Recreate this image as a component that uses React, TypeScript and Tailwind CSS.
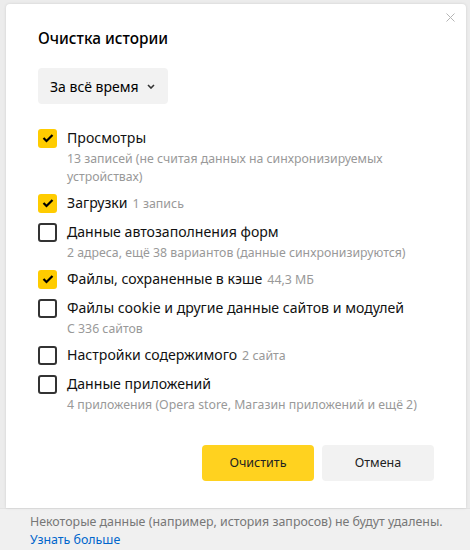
import { FC } from "react";

type Item = {
  label: string;
  note?: string;
  sub?: string;
  checked: boolean;
};

const ITEMS: Item[] = [
  {
    label: "Просмотры",
    sub: "13 записей (не считая данных на синхронизируемых устройствах)",
    checked: true,
  },
  { label: "Загрузки", note: "1 запись", checked: true },
  {
    label: "Данные автозаполнения форм",
    sub: "2 адреса, ещё 38 вариантов (данные синхронизируются)",
    checked: false,
  },
  { label: "Файлы, сохраненные в кэше", note: "44,3 МБ", checked: true },
  {
    label: "Файлы cookie и другие данные сайтов и модулей",
    sub: "С 336 сайтов",
    checked: false,
  },
  { label: "Настройки содержимого", note: "2 сайта", checked: false },
  {
    label: "Данные приложений",
    sub: "4 приложения (Opera store, Магазин приложений и ещё 2)",
    checked: false,
  },
];

const Checkbox: FC<{ checked: boolean }> = ({ checked }) =>
  checked ? (
    <div className="flex h-[19px] w-[19px] shrink-0 items-center justify-center rounded-[3px] bg-[#ffcc00]">
      <svg width="12" height="10" viewBox="0 0 12 10" fill="none">
        <path d="M1.5 5 L4.5 8 L10.5 2" stroke="#000" strokeWidth="2.2" />
      </svg>
    </div>
  ) : (
    <div className="h-[19px] w-[19px] shrink-0 rounded-[3px] border-2 border-[#333]" />
  );

export default function App() {
  return (
    <div
      className="flex h-[550px] w-[470px] flex-col overflow-hidden bg-[#ececec] pl-[6px] pr-[4px] pt-[4px]"
      style={{ fontFamily: '"Noto Sans", "Open Sans", sans-serif' }}
    >
      <div className="relative flex flex-1 flex-col rounded-t-[4px] bg-white px-[32px] pt-[24px] shadow-[0_0_3px_rgba(0,0,0,0.12)]">
        <svg
          className="absolute right-[11px] top-[9px]"
          width="9"
          height="9"
          viewBox="0 0 9 9"
        >
          <path d="M0.5 0.5 L8.5 8.5 M8.5 0.5 L0.5 8.5" stroke="#b5b5b5" strokeWidth="1" />
        </svg>

        <h1 className="text-[15.4px] font-medium leading-[22px] text-black">Очистка истории</h1>

        <div className="mt-[18px]">
          <button className="flex h-[36px] items-center gap-[9px] rounded-[4px] bg-[#f2f2f2] pl-[12px] pr-[13px] text-[14px] text-black">
            За всё время
            <svg width="8" height="5" viewBox="0 0 8 5" fill="none">
              <path d="M1 1 L4 4 L7 1" stroke="#333" strokeWidth="1.6" />
            </svg>
          </button>
        </div>

        <div className="mt-[23px] flex flex-col gap-[6px]">
          {ITEMS.map((item) => (
            <div key={item.label} className="flex items-start gap-[10px]">
              <div className="flex h-[22px] items-center">
                <Checkbox checked={item.checked} />
              </div>
              <div className="min-w-0">
                <div className="text-[14.1px] leading-[22px] text-[#111]">
                  {item.label}
                  {item.note && (
                    <span className="ml-[5px] text-[12.4px] text-[#999]">{item.note}</span>
                  )}
                </div>
                {item.sub && (
                  <div className="mt-[1px] text-[12.3px] leading-[18px] text-[#999]">
                    {item.sub}
                  </div>
                )}
              </div>
            </div>
          ))}
        </div>

        <div className="mt-[31px] flex justify-end gap-[8px]">
          <button className="h-[36px] w-[112px] rounded-[4px] bg-[#ffd21f] text-[12.5px] text-[#222]">
            Очистить
          </button>
          <button className="h-[36px] w-[112px] rounded-[4px] bg-[#f2f2f2] text-[12.5px] text-[#222]">
            Отмена
          </button>
        </div>
      </div>

      <div className="-ml-[6px] -mr-[4px] h-[42px] border-t border-[#e3e3e3] bg-[#f0f0f0] pl-[30px] pt-[4px] text-[12.4px] leading-[18px]">
        <div className="text-[#777]">
          Некоторые данные (например, история запросов) не будут удалены.
        </div>
        <a className="text-[#0066cc]">Узнать больше</a>
      </div>
    </div>
  );
}
